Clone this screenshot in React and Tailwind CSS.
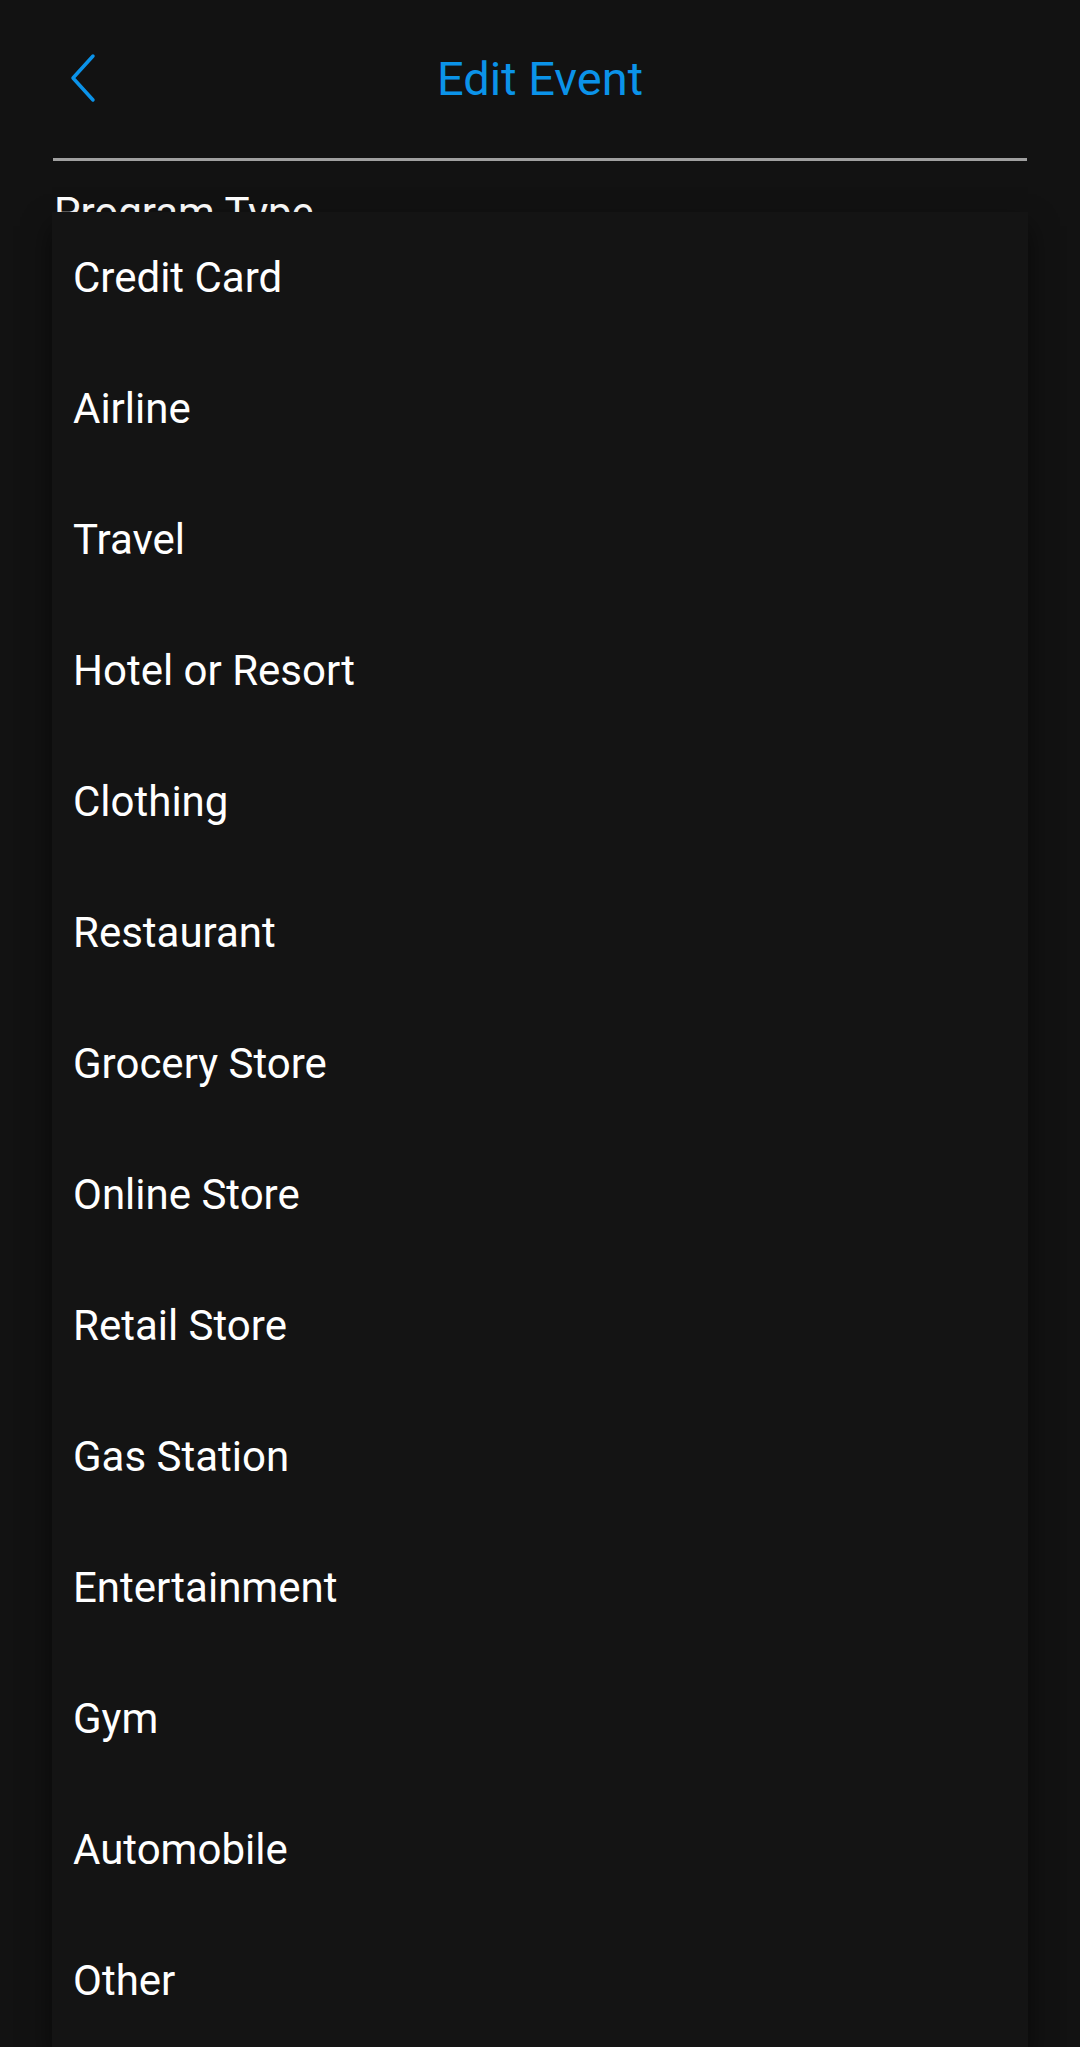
import React from "react";

const items = [
  "Credit Card",
  "Airline",
  "Travel",
  "Hotel or Resort",
  "Clothing",
  "Restaurant",
  "Grocery Store",
  "Online Store",
  "Retail Store",
  "Gas Station",
  "Entertainment",
  "Gym",
  "Automobile",
  "Other",
];

export default function App() {
  return (
    <div
      className="relative w-[1080px] h-[2047px] overflow-hidden bg-[#121212]"
      style={{ fontFamily: "Roboto, 'Liberation Sans', sans-serif" }}
    >
      <header className="relative h-[158px] flex items-center justify-center">
        <button className="absolute left-[66px] top-[50px] w-[34px] h-[56px] flex items-center justify-center">
          <svg width="34" height="56" viewBox="0 0 34 56" fill="none">
            <path
              d="M27 6 L7 28 L27 50"
              stroke="#0b93e9"
              strokeWidth="3.5"
              strokeLinecap="round"
              strokeLinejoin="round"
            />
          </svg>
        </button>
        <h1 className="text-[47px] leading-none text-[#0b93e9] font-normal -mt-[2px]">
          Edit Event
        </h1>
      </header>
      <div className="mx-[53px] h-[3px] bg-[#a0a0a0]" />
      <div className="px-[54px] pt-[26px] text-[42px] leading-[52px] text-white">
        Program Type
      </div>

      <div className="absolute top-[212px] left-[52px] right-[52px] bottom-0 bg-[#141414] shadow-[0_14px_26px_rgba(0,0,0,0.55)]">
        <ul className="flex flex-col">
          {items.map((it) => (
            <li
              key={it}
              className="h-[131px] flex items-center pl-[21px] text-[42px] leading-none text-white"
            >
              {it}
            </li>
          ))}
        </ul>
      </div>
    </div>
  );
}
